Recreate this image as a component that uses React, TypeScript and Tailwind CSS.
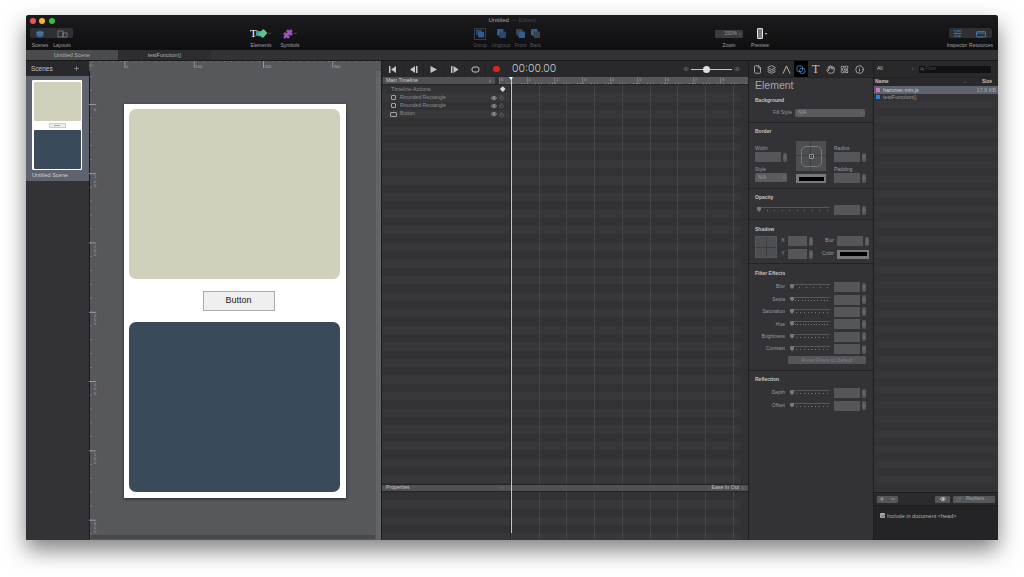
import React from "react";
import { Hand, Atom, Info, File, Layers, Eye, Lock, Plus, Minus, RotateCw, Check, Search, ChevronDown, ChevronsUpDown, SlidersHorizontal, Puzzle } from "lucide-react";

const F = "font-['Liberation_Sans',sans-serif]";

function ToolItem({ w, ml = 0, label, dim, children }: { w: number; ml?: number; label: string; dim?: boolean; children: React.ReactNode }) {
  return (
    <div className="flex flex-col items-center shrink-0" style={{ width: w, marginLeft: ml }}>
      <div className="h-[15px] flex items-center justify-center">{children}</div>
      <div className={`text-[5px] leading-[8px] whitespace-nowrap ${dim ? "text-[#55565a]" : "text-[#a2a2a4]"}`}>{label}</div>
    </div>
  );
}

function Squares({ a, b }: { a: string; b: string }) {
  return (
    <svg width="11" height="11" viewBox="0 0 11 11">
      <rect x="1" y="1" width="6.5" height="6.5" rx="1" fill={a} />
      <rect x="3.5" y="3.5" width="6.5" height="6.5" rx="1" fill={b} />
    </svg>
  );
}

function Stepper() {
  return (
    <div className="w-[4px] h-[9px] rounded-[2px] bg-[#5a5b5f] flex flex-col items-center justify-center ml-[2px] shrink-0">
      <ChevronsUpDown size={4} className="text-[#8b8c90]" />
    </div>
  );
}

function Field({ w = 26 }: { w?: number }) {
  return (
    <div className="flex items-center">
      <div className="h-[10px] bg-[#55565a] shrink-0" style={{ width: w }} />
      <Stepper />
    </div>
  );
}

function Well({ w }: { w: number }) {
  return (
    <div className="h-[9px] bg-[#77787c] flex items-center justify-center shrink-0" style={{ width: w }}>
      <div className="h-[4px] bg-black" style={{ width: w - 5 }} />
    </div>
  );
}

function Slider({ w, ticks = 9 }: { w: number; ticks?: number }) {
  return (
    <div className="relative h-[8px] shrink-0" style={{ width: w }}>
      <div className="h-[1px] bg-[#55565a] mt-[2px]" />
      <div className="flex justify-between px-[2px] mt-[2px]">
        {Array.from({ length: ticks }).map((_, i) => (
          <div key={i} className="w-[1px] h-[1px] bg-[#77787c]" />
        ))}
      </div>
      <div className="absolute left-0 top-0 w-[4px] h-[5px] bg-[#77787c] [clip-path:polygon(0_0,100%_0,100%_55%,50%_100%,0_55%)]" />
    </div>
  );
}

function Head({ children }: { children: React.ReactNode }) {
  return <div className="text-[5px] leading-[8px] font-bold text-[#c6c6c8]">{children}</div>;
}

function FilterRow({ label, ticks = 9, h = 12.4 }: { label: string; ticks?: number; h?: number }) {
  return (
    <div className="flex items-center" style={{ height: h }}>
      <div className="w-[36px] text-right text-[5px] text-[#9b9b9e] whitespace-nowrap">{label}</div>
      <div className="ml-[5px]"><Slider w={40} ticks={ticks} /></div>
      <div className="ml-[4px]"><Field /></div>
    </div>
  );
}

function CtlCell({ w, children }: { w: number; children: React.ReactNode }) {
  return <div className="h-full flex items-center justify-center border-r border-[#232325] shrink-0" style={{ width: w }}>{children}</div>;
}

function Ctl({ d }: { d: string }) {
  return <svg width="9" height="9" viewBox="0 0 9 9"><path d={d} fill="#c4c4c6" /></svg>;
}

function TopRuler() {
  const ticks = [];
  for (let x = 0; x < 292; x += 6.93) ticks.push(x);
  return (
    <svg width="292" height="10" className="block">
      {ticks.map((x, i) => <rect key={i} x={x + 3.5} y="0" width="0.7" height="1" fill="#8e8f92" />)}
      {[0, 100, 200, 300].map((v, i) => (
        <g key={v}>
          <rect x={35.5 + i * 69.3} y="0" width="0.8" height="7" fill="#a4a5a8" />
          <text x={37 + i * 69.3} y="7" fontSize="4" fill="#aaaaad" fontFamily="Liberation Sans">{v}</text>
        </g>
      ))}
      <path d="M2 1v6M0 4h5" stroke="#77787c" strokeWidth="0.7" />
    </svg>
  );
}

function LeftRuler() {
  const minor = [];
  for (let y = 0; y < 470; y += 13.86) minor.push(y);
  return (
    <svg width="8" height="470" className="block shrink-0">
      <rect x="0" y="0" width="1" height="470" fill="#18181a" />
      {minor.map((y, i) => <rect key={i} x="1" y={y + 5} width="1.5" height="0.7" fill="#97989b" />)}
      {[0, 100, 200, 300, 400, 500, 600].map((v, i) => (
        <g key={v}>
          <rect x="0" y={33 + i * 69.3} width="7" height="0.8" fill="#a4a5a8" />
          {String(v).split("").map((c, j) => (
            <text key={j} x="5" y={v === 0 ? 39.5 : 38 + i * 69.3 + j * 4.2} fontSize="4" fill="#a4a5a8" fontFamily="Liberation Sans">{c}</text>
          ))}
        </g>
      ))}
    </svg>
  );
}

function LayerRow({ label, kind }: { label: string; kind: "rect" | "btn" }) {
  return (
    <div className="h-[8.4px] flex items-center relative">
      {kind === "rect"
        ? <div className="ml-[9px] w-[5px] h-[5px] rounded-[1px] border border-[#a4a4a6]" />
        : <div className="ml-[8px] w-[7px] h-[5px] rounded-[1px] border border-[#a4a4a6]" />}
      <div className={`${kind === "rect" ? "ml-[4px]" : "ml-[3px]"} text-[5.2px] text-[#8d8d90] whitespace-nowrap`}>{label}</div>
      <div className="ml-auto flex items-center gap-[2px] mr-[6px]">
        <Eye size={6} className="text-[#d8d8da]" />
        <Lock size={5} className="text-[#77787b]" />
      </div>
    </div>
  );
}

export default function App() {
  return (
    <div className={`w-[1024px] h-[577px] bg-white overflow-hidden pt-[15px] pl-[26px] ${F}`}>
      <div className="relative w-[972px] h-[525px] flex flex-col shadow-[0_10px_22px_rgba(0,0,0,0.5)] rounded-t-[3px] overflow-hidden bg-[#333236]">
        {/* title + toolbar */}
        <div className="h-[35px] bg-[linear-gradient(180deg,#1b1b1d,#0f0f11)] relative shrink-0">
          <div className="absolute left-[3.5px] top-[3px] flex gap-[3.5px]">
            <div className="w-[6px] h-[6px] rounded-full bg-[#f0544c]" />
            <div className="w-[6px] h-[6px] rounded-full bg-[#f5b52e]" />
            <div className="w-[6px] h-[6px] rounded-full bg-[#2fc241]" />
          </div>
          <div className="h-[11px] flex items-center justify-center text-[6px] text-[#a8a8aa]">
            Untitled<span className="text-[#47474a] ml-[2px]">— Edited</span>
          </div>
          <div className="flex items-start">
            <div className="relative ml-[3px] flex">
              <div className="absolute left-[1px] top-[2px] w-[43px] h-[10px] rounded-[2px] bg-[#2f3034]" />
              <ToolItem w={22} label="Scenes">
                <svg width="8" height="8" viewBox="0 0 8 8" className="relative"><path d="M4 .5 7.5 2v4L4 7.5.5 6V2z" fill="#3d6a9c" /><path d="M.5 2 4 3.5 7.5 2" stroke="#8ab" strokeWidth=".4" fill="none" /></svg>
              </ToolItem>
              <ToolItem w={22} label="Layouts">
                <svg width="11" height="8" viewBox="0 0 11 8" className="relative" fill="none" stroke="#9a9b9e" strokeWidth=".6"><rect x="1" y="1" width="5" height="6" /><rect x="6" y="3" width="4" height="4" /></svg>
              </ToolItem>
            </div>
            <ToolItem ml={176} w={24} label="Elements">
              <div className="relative w-[22px] h-[11px] flex items-center">
                <span className="font-['Liberation_Serif',serif] text-[11px] leading-none text-white">T</span>
                <div className="absolute left-[6px] top-[3px] w-[5px] h-[5px] bg-[#3aa7b8] rotate-12" />
                <div className="absolute left-[10px] top-[2px] w-[6px] h-[7px] bg-[#5fc48a] rotate-45 rounded-[1px]" />
                <ChevronDown size={5} className="absolute right-0 top-[3px] text-[#a0a0a2]" />
              </div>
            </ToolItem>
            <ToolItem ml={5} w={24} label="Symbols">
              <div className="flex items-center">
                <Puzzle size={10} className="text-[#a553c4] fill-[#a553c4]" />
                <ChevronDown size={5} className="text-[#a0a0a2]" />
              </div>
            </ToolItem>
            <ToolItem ml={168} w={20} dim label="Group">
              <div className="w-[12px] h-[12px] border border-[#3a3b3f] flex items-center justify-center"><Squares a="#27486c" b="#2f5f92" /></div>
            </ToolItem>
            <ToolItem w={22} dim label="Ungroup"><Squares a="#2f5f92" b="#27486c" /></ToolItem>
            <ToolItem w={17} dim label="Front"><Squares a="#3c424b" b="#2f5f92" /></ToolItem>
            <ToolItem w={13} dim label="Back"><Squares a="#2f5f92" b="#3c424b" /></ToolItem>
            <ToolItem ml={173} w={28} label="Zoom">
              <div className="w-[28px] h-[8px] rounded-[1px] bg-[#3a3b3e] text-[5px] text-[#9a9b9e] flex items-center justify-end pr-[1px]">
                150%<ChevronsUpDown size={4} className="ml-[1px]" />
              </div>
            </ToolItem>
            <ToolItem ml={3} w={28} label="Preview">
              <div className="flex items-center gap-[2px] ml-[3px]">
                <div className="w-[6px] h-[11px] rounded-[1px] border border-[#e4e4e6] bg-[#77787b]" />
                <div className="w-0 h-0 border-x-[1.5px] border-x-transparent border-t-[2px] border-t-[#d8d8da]" />
              </div>
            </ToolItem>
            <div className="relative ml-[171px] flex">
              <div className="absolute left-[4px] top-[2px] w-[43px] h-[10px] rounded-[2px] bg-[#2f3034]" />
              <ToolItem w={24} label="Inspector">
                <SlidersHorizontal size={9} className="relative text-[#4a86c5]" />
              </ToolItem>
              <ToolItem w={24} label="Resources">
                <svg width="10" height="8" viewBox="0 0 10 8" className="relative" fill="none" stroke="#4a86c5" strokeWidth=".8"><rect x=".5" y="1.5" width="9" height="5.5" rx="1" /><path d="M.5 3h9" /></svg>
              </ToolItem>
            </div>
          </div>
        </div>

        {/* tabs */}
        <div className="h-[10px] flex shrink-0 bg-[#333336] text-[5.5px] text-[#b0b0b2]">
          <div className="w-[92px] bg-[#4a4b4e] flex items-center justify-center">Untitled Scene</div>
          <div className="w-[93px] bg-[#2d2d2f] flex items-center justify-center">testFunction()</div>
        </div>

        {/* main */}
        <div className="flex flex-1 min-h-0 border-t border-[#18181a]">
          {/* scenes */}
          <div className="w-[63px] shrink-0 flex flex-col bg-[#333236]">
            <div className="h-[15px] bg-[#29292b] flex items-center justify-between pl-[5px] pr-[9px]">
              <span className="text-[6.5px] text-[#c4c4c6]">Scenes</span>
              <Plus size={7} className="text-[#b0b0b2]" />
            </div>
            <div className="h-[105px] bg-[#5f636d] pt-[4px] px-[6px]">
              <div className="w-[50px] h-[90px] bg-white p-[1.5px] flex flex-col rounded-[1px]">
                <div className="h-[39px] bg-[#d1d0ba] rounded-[1px]" />
                <div className="h-[9px] flex items-center justify-center">
                  <div className="w-[17px] h-[5px] bg-[#eee] border border-[#ccc] text-[2px] text-[#333] flex items-center justify-center">Button</div>
                </div>
                <div className="flex-1 bg-[#3b4a5a] rounded-[1px]" />
              </div>
              <div className="text-[5.5px] leading-[8px] text-[#cfd0d4] mt-[1px]">Untitled Scene</div>
            </div>
          </div>

          {/* canvas */}
          <div className="w-[292px] shrink-0 flex flex-col bg-[#57585c] relative">
            <TopRuler />
            <div className="flex flex-1 min-h-0">
              <LeftRuler />
              <div className="flex-1 pl-[27px] pt-[33px]">
                <div className="w-[222px] h-[394px] bg-white shadow-[0_1px_3px_rgba(0,0,0,0.6)] pl-[4.5px] pr-[6px] pt-[5px] flex flex-col">
                  <div className="h-[170px] rounded-[7px] bg-[#d1d0ba] shrink-0" />
                  <div className="h-[43px] flex items-center shrink-0 pl-[74px]">
                    <div className="w-[72px] h-[20px] bg-[#efefef] border border-[#aaa] flex items-center justify-center text-[9px] text-[#222]">Button</div>
                  </div>
                  <div className="h-[170px] rounded-[7px] bg-[#3b4a5a] shrink-0" />
                </div>
              </div>
              <div className="w-[5px] bg-[#636467] shrink-0" />
            </div>
            <div className="absolute left-[2px] right-[6px] bottom-[1px] h-[4px] rounded-[1px] bg-[#47484b]" />
          </div>

          {/* timeline */}
          <div className="w-[367px] shrink-0 flex flex-col border-l border-[#1d1d1f] relative bg-[#323235]">
            <div className="h-[16px] flex items-center bg-[#29292b] shrink-0">
              <CtlCell w={22}><Ctl d="M1 1h1.5v7H1zM8 1v7L3 4.5z" /></CtlCell>
              <CtlCell w={20}><Ctl d="M7 1h1.5v7H7zM6 1v7L1 4.5z" /></CtlCell>
              <CtlCell w={20}><Ctl d="M1.5 1v7l6.5-3.5z" /></CtlCell>
              <CtlCell w={21}><Ctl d="M1 1h1.5v7H1zM3.5 1v7l5-3.5z" /></CtlCell>
              <CtlCell w={21}><svg width="9" height="7" viewBox="0 0 9 7" fill="none" stroke="#c4c4c6" strokeWidth="1"><rect x="1" y="1" width="7" height="5" rx="2" /></svg></CtlCell>
              <div className="w-[21px] flex justify-center shrink-0"><div className="w-[6.5px] h-[6.5px] rounded-full bg-[#d7261e]" /></div>
              <div className="ml-[5px] text-[10.5px] font-['Inter',sans-serif] font-light text-[#c9c9cb] leading-none">00:00.00</div>
              <div className="ml-auto mr-[8px] flex items-center gap-[2px]">
                <Eye size={6} className="text-[#77787b]" />
                <div className="relative w-[41px] h-[1px] bg-[#c4c4c6]">
                  <div className="absolute left-[12px] -top-[3px] w-[7px] h-[7px] rounded-full bg-[#e0e0e2]" />
                </div>
                <Eye size={6} className="text-[#77787b]" />
              </div>
            </div>
            <div className="h-[8px] flex shrink-0 border-b border-[#232325]">
              <div className="w-[124px] ml-[1px] bg-[#505155] flex items-center justify-between pl-[3px] pr-[3px] text-[5.2px] text-[#d0d0d2]">
                Main Timeline<ChevronsUpDown size={4} />
              </div>
              <div className="ml-[4px] flex-1 flex text-[4px] text-[#a0a0a2] bg-[#57585c] bg-[repeating-linear-gradient(90deg,#8b8c8f_0_0.7px,transparent_0.7px_2.8px)] bg-[length:100%_1px] bg-bottom bg-no-repeat">
                {[0, 1, 2, 3, 4, 5, 6, 7, 8].map((n) => (
                  <div key={n} className="w-[27.7px] h-full shrink-0 border-l border-[#77787b] pl-[1px] leading-[5px]">{n}</div>
                ))}
              </div>
            </div>
            <div className="h-[399px] flex shrink-0">
              <div className="w-[129px] shrink-0 border-r border-[#232325] bg-[repeating-linear-gradient(180deg,#323235_0_8.3px,#373739_8.3px_16.6px)]">
                <div className="h-[8.4px] flex items-center pl-[9px] pr-[6px] justify-between text-[5.5px] text-[#8d8d90]">
                  Timeline Actions
                  <div className="w-[3.5px] h-[3.5px] rotate-45 bg-[#d8d8da]" />
                </div>
                <LayerRow label="Rounded Rectangle" kind="rect" />
                <LayerRow label="Rounded Rectangle" kind="rect" />
                <LayerRow label="Button" kind="btn" />
              </div>
              <div className="flex-1 pr-[7px]">
                <div className="h-full bg-[repeating-linear-gradient(90deg,#454548_0_1px,transparent_1px_27.7px),repeating-linear-gradient(180deg,#323235_0_8.3px,#373739_8.3px_16.6px)]" />
              </div>
            </div>
            <div className="h-[8px] flex shrink-0 bg-[#505155] border-y border-[#232325]">
              <div className="w-[124px] ml-[1px] flex items-center justify-between pl-[3px] pr-[3px] text-[5.2px] text-[#c4c4c6]">
                Properties<ChevronDown size={4} />
              </div>
              <div className="ml-auto flex items-center pr-[3px] text-[5.2px] text-[#c4c4c6]">
                Ease In Out<ChevronsUpDown size={4} className="ml-[2px]" />
              </div>
            </div>
            <div className="flex-1 flex min-h-0">
              <div className="w-[129px] shrink-0 border-r border-[#232325] bg-[repeating-linear-gradient(180deg,#323235_0_8.3px,#373739_8.3px_16.6px)]" />
              <div className="flex-1 pr-[7px]">
                <div className="h-full bg-[repeating-linear-gradient(90deg,#454548_0_1px,transparent_1px_27.7px),repeating-linear-gradient(180deg,#323235_0_8.3px,#373739_8.3px_16.6px)]" />
              </div>
            </div>
            <div className="absolute left-[128.5px] top-[16px] bottom-[7px] w-[1px] bg-[#c8c8ca]" />
            <div className="absolute left-[126.5px] top-[16px] w-0 h-0 border-x-[2.5px] border-x-transparent border-t-[3px] border-t-white" />
          </div>

          {/* inspector */}
          <div className="w-[125px] shrink-0 flex flex-col border-l border-[#1d1d1f] bg-[#333236] text-[#9b9b9e]">
            <div className="h-[16px] bg-[#29292b] flex items-center shrink-0 pl-[1px]">
              {[
                <File key="a" size={9} />,
                <Layers key="b" size={9} />,
                <svg key="c" width="9" height="9" viewBox="0 0 9 9" fill="none" stroke="currentColor" strokeWidth=".9"><path d="M1 8.5 4.5 1 8 8.5" /></svg>,
              ].map((ic, i) => (
                <div key={i} className="w-[14.6px] h-full flex items-center justify-center text-[#c4c4c6]">{ic}</div>
              ))}
              <div className="w-[14.6px] h-full flex items-center justify-center bg-black">
                <svg width="10" height="9" viewBox="0 0 10 9" fill="none" stroke="#3f80c4" strokeWidth=".9"><rect x="1" y="1" width="5.5" height="5.5" rx="1.2" /><rect x="3.5" y="3" width="5.5" height="5.5" rx="2.5" /></svg>
              </div>
              <div className="w-[14.6px] h-full flex items-center justify-center font-['Liberation_Serif',serif] text-[12px] text-[#c4c4c6]">T</div>
              {[<Hand key="d" size={9} />, <Atom key="e" size={9} />, <Info key="f" size={9} />].map((ic, i) => (
                <div key={i} className="w-[14.6px] h-full flex items-center justify-center text-[#c4c4c6]">{ic}</div>
              ))}
            </div>
            <div className="h-[17px] pl-[6px] flex items-center text-[10.5px] text-[#a8a8aa] shrink-0 border-t border-[#232325]">Element</div>
            {/* background */}
            <div className="h-[29px] px-[6px] pt-[2px] border-b border-[#232325] shrink-0">
              <Head>Background</Head>
              <div className="flex items-center mt-[5px]">
                <span className="w-[37px] text-right text-[5px]">Fill Style</span>
                <div className="ml-[3px] w-[70px] h-[8px] rounded-[1.5px] bg-[#5a5b5f] flex items-center justify-between pl-[3px] pr-[1px] text-[5px] text-[#a0a0a2]">
                  N/A<ChevronsUpDown size={4} />
                </div>
              </div>
            </div>
            {/* border */}
            <div className="h-[66px] px-[6px] pt-[4px] border-b border-[#232325] shrink-0">
              <Head>Border</Head>
              <div className="flex mt-[6px]">
                <div className="w-[41px] shrink-0">
                  <div className="text-[5px] leading-[7px] mt-[4px]">Width</div>
                  <Field />
                  <div className="text-[5px] leading-[7px] mt-[4px]">Style</div>
                  <div className="w-[32px] h-[9px] rounded-[1.5px] bg-[#5a5b5f] flex items-center justify-between pl-[3px] pr-[1px] text-[5px]">
                    N/A<ChevronsUpDown size={4} />
                  </div>
                </div>
                <div className="w-[38px] shrink-0">
                  <div className="w-[30px] h-[30px] bg-[#4d4e52] bg-[linear-gradient(90deg,transparent_14.5px,#3c3c40_14.5px,#3c3c40_15.5px,transparent_15.5px),linear-gradient(180deg,transparent_14.5px,#3c3c40_14.5px,#3c3c40_15.5px,transparent_15.5px)] flex items-center justify-center">
                    <div className="w-[21px] h-[21px] rounded-[5px] border border-[#77787c] flex items-center justify-center">
                      <div className="w-[5px] h-[5px] rounded-[1px] border border-[#96979a]" />
                    </div>
                  </div>
                  <div className="mt-[3px]"><Well w={30} /></div>
                </div>
                <div className="shrink-0">
                  <div className="text-[5px] leading-[7px] mt-[4px]">Radius</div>
                  <Field />
                  <div className="text-[5px] leading-[7px] mt-[4px]">Padding</div>
                  <Field />
                </div>
              </div>
            </div>
            {/* opacity */}
            <div className="h-[31px] px-[6px] pt-[4px] border-b border-[#232325] shrink-0">
              <Head>Opacity</Head>
              <div className="flex items-center mt-[4px]">
                <div className="ml-[2px]"><Slider w={73} ticks={10} /></div>
                <div className="ml-[4px]"><Field /></div>
              </div>
            </div>
            {/* shadow */}
            <div className="h-[44px] px-[6px] pt-[5px] border-b border-[#232325] shrink-0">
              <Head>Shadow</Head>
              <div className="flex mt-[3px]">
                <div className="w-[22px] h-[22px] bg-[#3c3c40] grid grid-cols-2 gap-[1px] shrink-0 border border-[#55565a]">
                  <div className="bg-[#4d4e52]" /><div className="bg-[#4d4e52]" /><div className="bg-[#4d4e52]" /><div className="bg-[#4d4e52]" />
                </div>
                <div className="flex flex-col gap-[3px]">
                  <div className="flex items-center">
                    <span className="w-[10px] text-[5px] text-center ml-[1px]">X</span>
                    <Field w={19} />
                    <span className="w-[21px] text-right text-[5px] mr-[3px]">Blur</span>
                    <div className="w-[26px] h-[10px] bg-[#55565a]" /><Stepper />
                  </div>
                  <div className="flex items-center">
                    <span className="w-[10px] text-[5px] text-center ml-[1px]">Y</span>
                    <Field w={19} />
                    <span className="w-[21px] text-right text-[5px] mr-[3px]">Color</span>
                    <Well w={32} />
                  </div>
                </div>
              </div>
            </div>
            {/* filter */}
            <div className="h-[107px] pt-[5px] border-b border-[#232325] shrink-0">
              <div className="pl-[6px]"><Head>Filter Effects</Head></div>
              <div className="mt-[4px]">
                <FilterRow label="Blur" ticks={6} />
                <FilterRow label="Sepia" ticks={12} />
                <FilterRow label="Saturation" ticks={10} />
                <FilterRow label="Hue" ticks={14} />
                <FilterRow label="Brightness" ticks={10} />
                <FilterRow label="Contrast" ticks={10} />
              </div>
              <div className="ml-[39px] mt-[1px] w-[78px] h-[8px] rounded-[1.5px] bg-[#55565a] flex items-center justify-center text-[5px] text-[#7e7f82]">Reset Filters to Default</div>
            </div>
            {/* reflection */}
            <div className="pt-[4px]">
              <div className="pl-[6px]"><Head>Reflection</Head></div>
              <div className="mt-[4px]">
                <FilterRow label="Depth" ticks={10} />
                <FilterRow label="Offset" ticks={10} />
              </div>
            </div>
          </div>

          {/* resources */}
          <div className="flex-1 flex flex-col border-l border-[#1d1d1f] bg-[#333236]">
            <div className="h-[16px] bg-[#29292b] flex items-center shrink-0 pl-[3px] text-[5px] text-[#c4c4c6]">
              <span className="w-[34px]">All</span>
              <ChevronsUpDown size={4} className="text-[#77787b]" />
              <div className="ml-[4px] w-[72px] h-[7px] bg-[#111113] flex items-center pl-[1px] text-[#47484b]">
                <Search size={4} className="text-[#b0b0b2] mr-[1px]" />Filter
              </div>
            </div>
            <div className="h-[9px] flex items-center shrink-0 pl-[1px] pr-[6px] bg-[#29292b] text-[5px] font-bold text-[#c4c4c6] border-t border-[#232325]">
              <span>Name</span>
              <ChevronDown size={4} className="ml-auto mr-[15px] rotate-180" />
              <span>Size</span>
            </div>
            <div className="h-[7.5px] bg-[#5f636d] flex items-center pl-[2px] pr-[2px] text-[5.5px] text-[#d0d0d4] shrink-0">
              <div className="w-[4px] h-[4px] bg-[#d070d0] mr-[3px]" />
              hammer.min.js
              <span className="ml-auto text-[#a8a9ad]">17.9 KB</span>
            </div>
            <div className="h-[7.5px] flex items-center pl-[2px] text-[5.5px] text-[#9b9b9e] shrink-0">
              <div className="w-[4px] h-[4px] bg-[#2f80d0] mr-[3px]" />
              testFunction()
            </div>
            <div className="h-[391px] shrink-0 bg-[repeating-linear-gradient(180deg,#37373a_0_7.5px,#333236_7.5px_15px)]" />
            <div className="h-[14px] shrink-0 border-y border-[#1d1d1f] bg-[#2b2b2d] flex items-center pl-[3px] pr-[3px]">
              <div className="w-[21px] h-[7px] rounded-[1px] bg-[#55565a] flex items-center justify-around text-[#c4c4c6]">
                <Plus size={6} /><Minus size={6} />
              </div>
              <div className="ml-auto w-[15px] h-[7px] rounded-[1px] bg-[#55565a] flex items-center justify-center">
                <Eye size={6} className="text-white" />
              </div>
              <div className="ml-[3px] w-[42px] h-[7px] rounded-[1px] bg-[#55565a] flex items-center pl-[3px] text-[5px] text-[#a0a0a2]">
                <RotateCw size={5} className="text-[#8d8d90] mr-[5px]" />Replace...
              </div>
            </div>
            <div className="flex-1 bg-[#242426] pl-[6px] pt-[6px] flex items-start text-[5.5px] text-[#b0b0b2]">
              <div className="w-[5px] h-[5px] rounded-[1px] bg-[#a8a8aa] flex items-center justify-center mr-[2px] mt-[1px]">
                <Check size={4} className="text-[#222]" strokeWidth={4} />
              </div>
              Include in document &lt;head&gt;
            </div>
          </div>
        </div>
      </div>
    </div>
  );
}
